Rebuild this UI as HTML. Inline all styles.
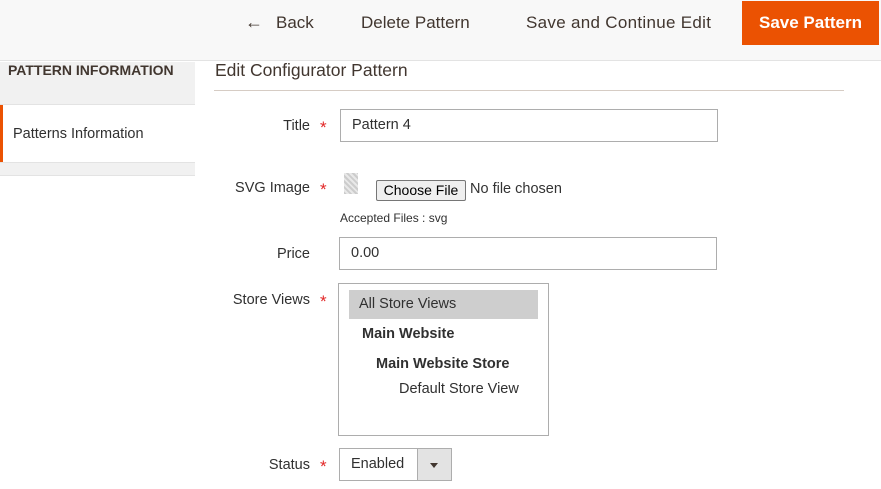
<!DOCTYPE html>
<html><head><style>
*{margin:0;padding:0;box-sizing:border-box}
body{width:881px;height:489px;overflow:hidden;background:#fff;font-family:"Liberation Sans",sans-serif;color:#303030;position:relative}
.a{position:absolute}
.hdr{left:0;top:0;width:881px;height:61px;background:#f8f8f8;border-bottom:1px solid #e3e3e3}
.hb{font-size:17px;color:#41362f;top:13px}
.save{left:742px;top:1px;width:137px;height:44px;background:#eb5202;color:#fff;font-weight:bold;font-size:17px;text-align:center;line-height:44px}
.lbl{font-size:14.5px;color:#303030;text-align:right;width:100px;left:210px}
.star{color:#e22626;font-size:17px;left:320px}
.inp{border:1px solid #adadad;height:33px;font-size:14.5px;padding-left:11px;line-height:31px;background:#fff}
</style></head><body>
<div class="a hdr"></div>
<div class="a hb" style="left:245px;font-size:18px;top:12px">&#8592;</div>
<div class="a hb" style="left:276px">Back</div>
<div class="a hb" style="left:361px">Delete Pattern</div>
<div class="a hb" style="left:526px;letter-spacing:0.3px">Save and Continue Edit</div>
<div class="a save">Save Pattern</div>

<div class="a" style="left:0;top:62px;width:195px;height:43px;background:#f1f1f1;border-bottom:1px solid #e3e3e3"></div>
<div class="a" style="left:8px;top:62px;font-size:14px;font-weight:bold;color:#41362f">PATTERN INFORMATION</div>
<div class="a" style="left:0;top:105px;width:195px;height:57px;background:#fff;border-left:3px solid #eb5202"></div>
<div class="a" style="left:13px;top:126px;font-size:14.5px;color:#303030">Patterns Information</div>
<div class="a" style="left:0;top:162px;width:195px;height:14px;background:#f1f1f1;border-top:1px solid #e3e3e3;border-bottom:1px solid #e3e3e3"></div>

<div class="a" style="left:215px;top:60px;font-size:17.5px;color:#41362f">Edit Configurator Pattern</div>
<div class="a" style="left:214px;top:90px;width:630px;height:1px;background:#d6ccc4"></div>

<div class="a lbl" style="top:118px">Title</div><div class="a star" style="top:118px">*</div>
<div class="a inp" style="left:340px;top:109px;width:378px">Pattern 4</div>

<div class="a lbl" style="top:180px">SVG Image</div><div class="a star" style="top:180px">*</div>
<div class="a" style="left:344px;top:173px;width:14px;height:21px;background:repeating-linear-gradient(45deg,#ccc 0 2px,#e8e8e8 2px 4px)"></div>
<div class="a" style="left:376px;top:180px;width:90px;height:21px;border:1px solid #767676;border-radius:2px;background:#efefef;font-size:14px;text-align:center;line-height:19px;color:#000">Choose File</div>
<div class="a" style="left:470px;top:181px;font-size:14.5px;color:#333">No file chosen</div>
<div class="a" style="left:340px;top:211px;font-size:12px;color:#303030">Accepted Files : svg</div>

<div class="a lbl" style="top:246px">Price</div>
<div class="a inp" style="left:339px;top:237px;width:378px">0.00</div>

<div class="a lbl" style="top:292px">Store Views</div><div class="a star" style="top:292px">*</div>
<div class="a" style="left:338px;top:283px;width:211px;height:153px;border:1px solid #adadad"></div>
<div class="a" style="left:349px;top:290px;width:189px;height:29px;background:#cecece;font-size:14.5px;padding-left:10px;line-height:29px">All Store Views</div>
<div class="a" style="left:362px;top:326px;font-size:14.5px;font-weight:bold">Main Website</div>
<div class="a" style="left:376px;top:356px;font-size:14.5px;font-weight:bold">Main Website Store</div>
<div class="a" style="left:399px;top:381px;font-size:14.5px">Default Store View</div>

<div class="a lbl" style="top:457px">Status</div><div class="a star" style="top:457px">*</div>
<div class="a inp" style="left:339px;top:448px;width:113px">Enabled</div>
<div class="a" style="left:417px;top:449px;width:34px;height:31px;background:#e3e3e3;border-left:1px solid #adadad"></div>
<div class="a" style="left:430px;top:463px;width:0;height:0;border-left:4px solid transparent;border-right:4px solid transparent;border-top:5px solid #41362f"></div>
</body></html>
